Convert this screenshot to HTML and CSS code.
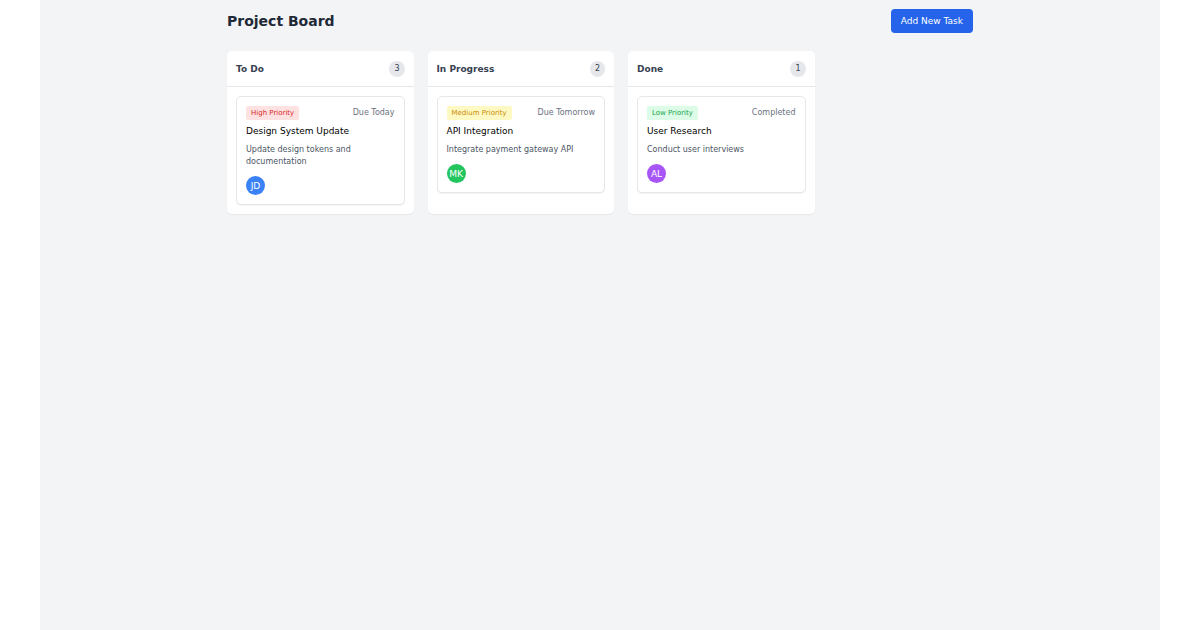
FILE: index.html
```
<!DOCTYPE html>
<html lang="en">
<head>
    <meta charset="UTF-8">
    <meta name="viewport" content="width=device-width, initial-scale=1.0">
    <title>Project Board</title>
    <link rel="stylesheet" href="styles.css">
</head>
<body>

    <div class="page">
        <div class="container">
            <header class="page-header">
                <h1>Project Board</h1>
                <button type="button" class="add-button">Add New Task</button>
            </header>

            <main class="board">
                <section class="column">
                    <div class="column-header">
                        <h2>To Do</h2>
                        <span class="count">3</span>
                    </div>
                    <div class="column-body">
                        <article class="card">
                            <div class="card-top">
                                <span class="tag tag-high">High Priority</span>
                                <span class="due">Due Today</span>
                            </div>
                            <h3>Design System Update</h3>
                            <p>Update design tokens and documentation</p>
                            <div class="avatar avatar-blue">JD</div>
                        </article>
                    </div>
                </section>

                <section class="column">
                    <div class="column-header">
                        <h2>In Progress</h2>
                        <span class="count">2</span>
                    </div>
                    <div class="column-body">
                        <article class="card">
                            <div class="card-top">
                                <span class="tag tag-medium">Medium Priority</span>
                                <span class="due">Due Tomorrow</span>
                            </div>
                            <h3>API Integration</h3>
                            <p>Integrate payment gateway API</p>
                            <div class="avatar avatar-green">MK</div>
                        </article>
                    </div>
                </section>

                <section class="column">
                    <div class="column-header">
                        <h2>Done</h2>
                        <span class="count">1</span>
                    </div>
                    <div class="column-body">
                        <article class="card">
                            <div class="card-top">
                                <span class="tag tag-low">Low Priority</span>
                                <span class="due">Completed</span>
                            </div>
                            <h3>User Research</h3>
                            <p>Conduct user interviews</p>
                            <div class="avatar avatar-purple">AL</div>
                        </article>
                    </div>
                </section>
            </main>
        </div>
    </div>

</body>
</html>
```
FILE: styles.css
```
* {
    box-sizing: border-box;
}

body {
    margin: 0;
    background-color: #fff;
    font-family: "DejaVu Sans", sans-serif;
    font-size: 9px;
    line-height: 14px;
}

h1, h2, h3, p {
    margin: 0;
}

.page {
    min-height: 100vh;
    margin: 0 40px;
    padding: 9px;
    background-color: #f3f4f6;
}

.container {
    max-width: 746px;
    margin: 0 auto;
}

.page-header {
    display: flex;
    justify-content: space-between;
    align-items: center;
    margin-bottom: 18px;
}

h1 {
    color: #1f2937;
    font-size: 14px;
    line-height: 19px;
}

.add-button {
    padding: 5px 10px;
    border: none;
    border-radius: 4px;
    background-color: #2563eb;
    color: #fff;
    font: inherit;
    cursor: pointer;
}

.board {
    display: flex;
    gap: 14px;
}

.column {
    flex: 0 0 25%;
    border-radius: 5px;
    background-color: #fff;
    box-shadow: 0 1px 1px rgba(0, 0, 0, 0.05);
}

.column-header {
    display: flex;
    justify-content: space-between;
    align-items: center;
    padding: 10px 9px 9px;
    border-bottom: 1px solid #e5e7eb;
}

h2 {
    color: #374151;
    font-size: 9px;
}

.count {
    padding: 1px 5px;
    border-radius: 8px;
    background-color: #e5e7eb;
    color: #374151;
    font-size: 8px;
}

.column-body {
    padding: 9px;
}

.card {
    padding: 9px;
    border: 1px solid #e5e7eb;
    border-radius: 5px;
    background-color: #fff;
    box-shadow: 0 1px 1px rgba(0, 0, 0, 0.05);
}

.card-top {
    display: flex;
    justify-content: space-between;
    align-items: center;
    margin-bottom: 4px;
}

.tag {
    padding: 0 5px;
    border-radius: 2px;
    font-size: 7px;
}

.tag-high {
    background-color: #fee2e2;
    color: #dc2626;
}

.tag-medium {
    background-color: #fef9c3;
    color: #ca8a04;
}

.tag-low {
    background-color: #dcfce7;
    color: #16a34a;
}

.due {
    color: #6b7280;
    font-size: 8px;
}

h3 {
    margin-bottom: 6px;
    color: #000;
    font-size: 9px;
    font-weight: normal;
}

.card p {
    margin-bottom: 8px;
    color: #4b5563;
    font-size: 8px;
    line-height: 12px;
}

.avatar {
    display: flex;
    justify-content: center;
    align-items: center;
    width: 19px;
    height: 19px;
    border-radius: 50%;
    color: #fff;
}

.avatar-blue {
    background-color: #3b82f6;
}

.avatar-green {
    background-color: #22c55e;
}

.avatar-purple {
    background-color: #a855f7;
}
```
